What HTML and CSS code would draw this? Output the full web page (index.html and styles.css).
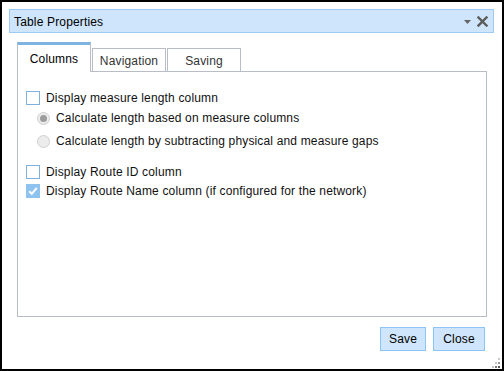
FILE: index.html
```html
<!DOCTYPE html>
<html>
<head>
<meta charset="utf-8">
<link rel="stylesheet" href="styles.css">
</head>
<body>
<div class="frame">
  <div class="titlebar">
    <span class="title">Table Properties</span>
    <span class="tools">
      <svg class="arrow" width="7" height="4" viewBox="0 0 7 4"><polygon points="0,0 7,0 3.5,4" fill="#666"/></svg>
      <svg class="close" width="11" height="11" viewBox="0 0 11 11"><path d="M1.5 1.5 L9.5 9.5 M9.5 1.5 L1.5 9.5" stroke="#5a5a5a" stroke-width="2.4" stroke-linecap="square"/></svg>
    </span>
  </div>
  <div class="content">
    <div class="tabs">
      <div class="tab active">Columns</div>
      <div class="tab">Navigation</div>
      <div class="tab">Saving</div>
    </div>
    <div class="panel">
      <div class="row r1"><span class="cb"></span><span class="label">Display measure length column</span></div>
      <div class="row sub r2"><span class="radio on"></span><span class="label">Calculate length based on measure columns</span></div>
      <div class="row sub r3"><span class="radio"></span><span class="label">Calculate length by subtracting physical and measure gaps</span></div>
      <div class="row r4"><span class="cb"></span><span class="label">Display Route ID column</span></div>
      <div class="row r5"><span class="cb checked"><svg width="12" height="12" viewBox="0 0 12 12"><path d="M2.2 6.2 L4.8 8.8 L9.8 2.8" fill="none" stroke="#fff" stroke-width="2"/></svg></span><span class="label">Display Route Name column (if configured for the network)</span></div>
    </div>
    <div class="footer">
      <button class="btn save">Save</button>
      <button class="btn closebtn">Close</button>
    </div>
  </div>
  <svg class="grip" width="8" height="10" viewBox="0 0 8 10">
    <rect x="6" y="0" width="2" height="2" fill="#c8c8c8"/>
    <rect x="6" y="4" width="2" height="2" fill="#9a9a9a"/>
    <rect x="3" y="4" width="2" height="2" fill="#c8c8c8"/>
    <rect x="6" y="8" width="2" height="2" fill="#555"/>
    <rect x="3" y="8" width="2" height="2" fill="#777"/>
    <rect x="0" y="8" width="2" height="2" fill="#c8c8c8"/>
  </svg>
</div>
</body>
</html>
```
FILE: styles.css
```css
html, body {
  margin: 0;
  padding: 0;
  background: #fff;
}
body {
  font-family: "Liberation Sans", Arial, sans-serif;
  font-size: 12px;
  letter-spacing: 0.16px;
  color: #000;
}
.frame {
  position: relative;
  width: 504px;
  height: 371px;
  box-sizing: border-box;
  border: 2px solid #000;
  padding: 7px 8px 0 7px;
  display: flex;
  flex-direction: column;
}
.titlebar {
  height: 24px;
  box-sizing: border-box;
  border: 1px solid #9fcbf2;
  background: #cfe5fb;
  padding: 0 5px 0 4px;
  display: flex;
  align-items: center;
  justify-content: space-between;
}
.title {
  line-height: 14px;
  padding-top: 1px;
}
.tools {
  display: flex;
  align-items: center;
}
.arrow {
  display: block;
  margin-right: 6px;
  margin-top: 1px;
}
.close {
  display: block;
}
.content {
  padding: 9px 7px 0 8px;
  display: flex;
  flex-direction: column;
}
.tabs {
  display: flex;
  align-items: flex-end;
  gap: 1px;
  height: 30px;
  margin-bottom: -1px;
  position: relative;
  z-index: 1;
}
.tab {
  width: 74px;
  box-sizing: border-box;
  height: 24px;
  border: 1px solid #b9bec6;
  background: #fff;
  color: #333;
  display: flex;
  align-items: center;
  justify-content: center;
  padding-top: 1px;
}
.tab.active {
  height: 30px;
  border-top: 3px solid #7fb4e2;
  border-bottom: none;
  color: #000;
  padding-top: 1px;
}
.panel {
  height: 246px;
  box-sizing: border-box;
  border: 1px solid #b9bec6;
  padding: 16px 8px 0 8px;
  display: flex;
  flex-direction: column;
}
.row {
  display: flex;
  align-items: center;
  height: 20px;
}
.row.sub {
  padding-left: 11px;
}
.r3 { margin-top: 3px; }
.r4 { margin-top: 11px; height: 19px; }
.cb {
  width: 14px;
  height: 14px;
  box-sizing: border-box;
  border: 1px solid #7fb1de;
  background: #fff;
  margin-right: 6px;
  display: flex;
  align-items: center;
  justify-content: center;
}
.cb.checked {
  background: #8ec3f0;
  border-color: #8ec3f0;
}
.cb svg { display: block; }
.radio {
  width: 13px;
  height: 13px;
  box-sizing: border-box;
  border-radius: 50%;
  border: 1px solid #d0d0d0;
  background: #ececec;
  margin-right: 6px;
  display: flex;
  align-items: center;
  justify-content: center;
}
.radio.on::after {
  content: "";
  width: 7px;
  height: 7px;
  border-radius: 50%;
  background: #9c9c9c;
}
.label {
  line-height: 14px;
  color: #111;
}
.footer {
  display: flex;
  justify-content: flex-end;
  gap: 7px;
  margin-top: 10px;
  padding-right: 2px;
}
.btn {
  font-family: "Liberation Sans", Arial, sans-serif;
  font-size: 12px;
  letter-spacing: 0.16px;
  color: #000;
  height: 24px;
  box-sizing: border-box;
  border: 1px solid #8cc4f5;
  background: #cfe5fb;
  padding: 0;
  margin: 0;
}
.save { width: 46px; }
.closebtn { width: 52px; }
.grip {
  position: absolute;
  right: 2px;
  bottom: 1px;
  display: block;
}
```
